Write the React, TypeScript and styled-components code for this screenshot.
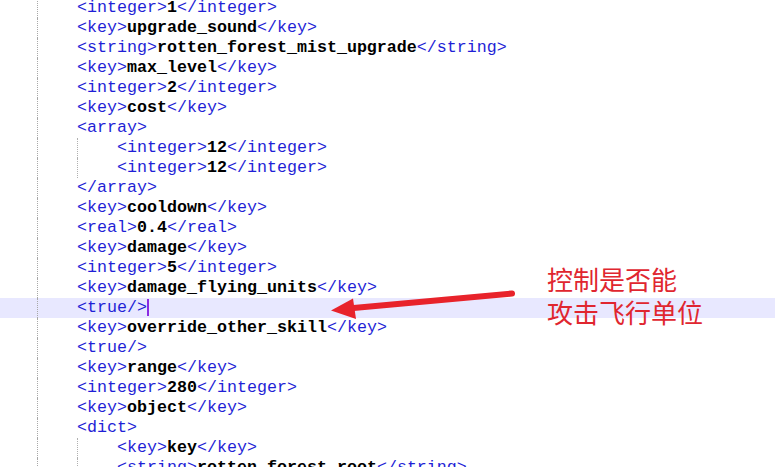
import React from "react";
import styled, { createGlobalStyle } from "styled-components";

const GlobalStyle = createGlobalStyle`
  html, body {
    margin: 0;
    padding: 0;
    background: #ffffff;
  }
`;

const Editor = styled.div`
  position: relative;
  width: 775px;
  height: 467px;
  overflow: hidden;
  background: #ffffff;
  font-family: "Liberation Mono", "Courier New", monospace;
  font-size: 16.67px;
`;

const Lines = styled.div`
  margin-top: -2px;
`;

const Row = styled.div<{ $current?: boolean }>`
  display: flex;
  height: 20px;
  line-height: 20px;
  background: ${(p) => (p.$current ? "#e8e8ff" : "transparent")};
`;

const Gutter = styled.div`
  width: 37px;
  flex: none;
  border-right: 1px dotted #a8a8a8;
`;

const Code = styled.div`
  display: flex;
  padding-left: 39px;
  white-space: pre;
`;

const Guide = styled.span`
  display: inline-block;
  width: 39px;
  height: 20px;
  border-left: 1px dotted #b0b0b0;
`;

const Tag = styled.span`
  color: #1f1fd6;
`;

const Value = styled.span`
  color: #000000;
  font-weight: bold;
`;

const Caret = styled.span`
  display: inline-block;
  width: 0;
  height: 17px;
  margin-top: 1px;
  border-left: 2px solid #8a2be2;
  vertical-align: top;
`;

const Note = styled.div`
  position: absolute;
  left: 547px;
  top: 262px;
  font-family: "Noto Sans CJK SC", "Noto Sans", sans-serif;
  font-size: 26px;
  line-height: 33px;
  color: #e0262f;
`;

const Arrow = styled.svg`
  position: absolute;
  left: 320px;
  top: 280px;
`;

type Line = {
  indent?: number;
  tag?: string;
  value?: string;
  raw?: string;
  current?: boolean;
};

const lines: Line[] = [
  { tag: "integer", value: "1" },
  { tag: "key", value: "upgrade_sound" },
  { tag: "string", value: "rotten_forest_mist_upgrade" },
  { tag: "key", value: "max_level" },
  { tag: "integer", value: "2" },
  { tag: "key", value: "cost" },
  { raw: "<array>" },
  { indent: 1, tag: "integer", value: "12" },
  { indent: 1, tag: "integer", value: "12" },
  { raw: "</array>" },
  { tag: "key", value: "cooldown" },
  { tag: "real", value: "0.4" },
  { tag: "key", value: "damage" },
  { tag: "integer", value: "5" },
  { tag: "key", value: "damage_flying_units" },
  { raw: "<true/>", current: true },
  { tag: "key", value: "override_other_skill" },
  { raw: "<true/>" },
  { tag: "key", value: "range" },
  { tag: "integer", value: "280" },
  { tag: "key", value: "object" },
  { raw: "<dict>" },
  { indent: 1, tag: "key", value: "key" },
  { indent: 1, tag: "string", value: "rotten_forest_root" },
];

function CodeLine({ line }: { line: Line }) {
  const guides = Array.from({ length: line.indent || 0 }, (_, i) => (
    <Guide key={i} />
  ));
  return (
    <Row $current={line.current}>
      <Gutter />
      <Code>
        {guides}
        {line.raw ? (
          <Tag>{line.raw}</Tag>
        ) : (
          <>
            <Tag>{`<${line.tag}>`}</Tag>
            <Value>{line.value}</Value>
            <Tag>{`</${line.tag}>`}</Tag>
          </>
        )}
        {line.current && <Caret />}
      </Code>
    </Row>
  );
}

export default function App() {
  return (
    <>
      <GlobalStyle />
      <Editor>
        <Lines>
          {lines.map((l, i) => (
            <CodeLine key={i} line={l} />
          ))}
        </Lines>
        <Arrow width="210" height="45" viewBox="320 280 210 45">
          <line
            x1="512"
            y1="293.5"
            x2="348"
            y2="308.5"
            stroke="#e8232b"
            strokeWidth="6"
            strokeLinecap="round"
          />
          <polygon points="331,310.5 353,298.5 356,319" fill="#e8232b" />
        </Arrow>
        <Note>
          <div>控制是否能</div>
          <div>攻击飞行单位</div>
        </Note>
      </Editor>
    </>
  );
}
